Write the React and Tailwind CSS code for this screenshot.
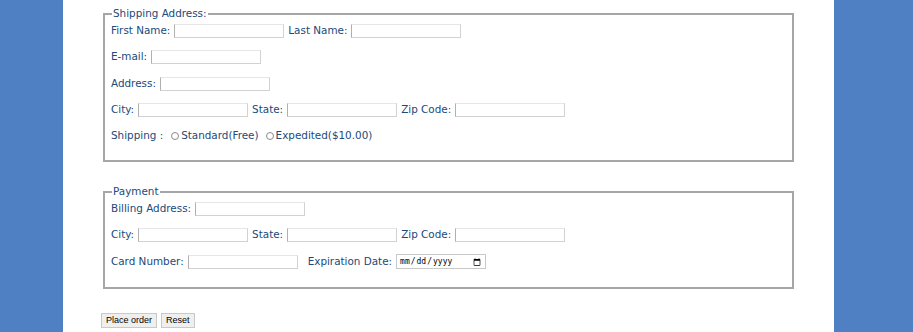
import React from 'react'

const font = { fontFamily: '"DejaVu Sans", Verdana, sans-serif' }

function Field({ label, w = 'w-[110px]' }) {
  return (
    <>
      <span>{label}</span>
      <input type="text" className={`${w} h-[14px] border border-[#d2d2d2] border-t-[#e6e6e6] border-l-[#b0b0b0] bg-white outline-none`} />
    </>
  )
}

function Radio({ label, className = '' }) {
  return (
    <span className={`flex items-center gap-[2px] ${className}`}>
      <span className="inline-block w-[8px] h-[8px] rounded-full border border-[#8a8a8a] bg-white"></span>
      <span>{label}</span>
    </span>
  )
}

function App() {
  return (
    <div className="h-[332px] overflow-hidden bg-[#5080c4]">
      <div className="ml-[63px] w-[771px] h-full bg-white pt-[7px] text-[10.4px] text-[#21497a]" style={font}>

        <fieldset className="mx-[40px] w-[691px] border-2 border-[#a6a6a6] px-[6px] pt-[4px] pb-[17px]">
          <legend className="px-[1px] ml-[1px] leading-[13px]">Shipping Address:</legend>
          <div className="flex flex-col gap-[12.25px]">
            <div className="flex items-center gap-[4px] h-[14px]">
              <Field label="First Name:" />
              <Field label="Last Name:" />
            </div>
            <div className="flex items-center gap-[4px] h-[14px]">
              <Field label="E-mail:" />
            </div>
            <div className="flex items-center gap-[4px] h-[14px]">
              <Field label="Address:" />
            </div>
            <div className="flex items-center gap-[4px] h-[14px]">
              <Field label="City:" />
              <Field label="State:" />
              <Field label="Zip Code:" />
            </div>
            <div className="flex items-center gap-[4px] h-[14px]">
              <span className="mr-[4px]">Shipping :</span>
              <Radio label="Standard(Free)" />
              <Radio label="Expedited($10.00)" className="ml-[3px]" />
            </div>
          </div>
        </fieldset>

        <fieldset className="mt-[23px] mx-[40px] w-[691px] border-2 border-[#a6a6a6] px-[6px] pt-[4px] pb-[18px]">
          <legend className="px-[1px] ml-[1px] leading-[13px]">Payment</legend>
          <div className="flex flex-col gap-[12.25px]">
            <div className="flex items-center gap-[4px] h-[14px]">
              <Field label="Billing Address:" />
            </div>
            <div className="flex items-center gap-[4px] h-[14px]">
              <Field label="City:" />
              <Field label="State:" />
              <Field label="Zip Code:" />
            </div>
            <div className="flex items-center gap-[4px] h-[14px]">
              <Field label="Card Number:" />
              <span className="ml-[6px]">Expiration Date:</span>
              <input
                type="date"
                className="w-[90px] h-[15px] border border-[#c8c8c8] px-[2px] text-[8px] text-black bg-white"
                style={{ fontFamily: '"DejaVu Sans Mono", monospace' }}
              />
            </div>
          </div>
        </fieldset>

        <div className="mt-[24px] ml-[38px] flex gap-[4px] text-[9px] text-black" style={{ fontFamily: '"Liberation Sans", Arial, sans-serif' }}>
          <button className="h-[15px] px-[4px] bg-[#efefef] border border-[#c9c9c9] leading-none">Place order</button>
          <button className="h-[15px] px-[4px] bg-[#efefef] border border-[#c9c9c9] leading-none">Reset</button>
        </div>
      </div>
    </div>
  )
}

export default App
